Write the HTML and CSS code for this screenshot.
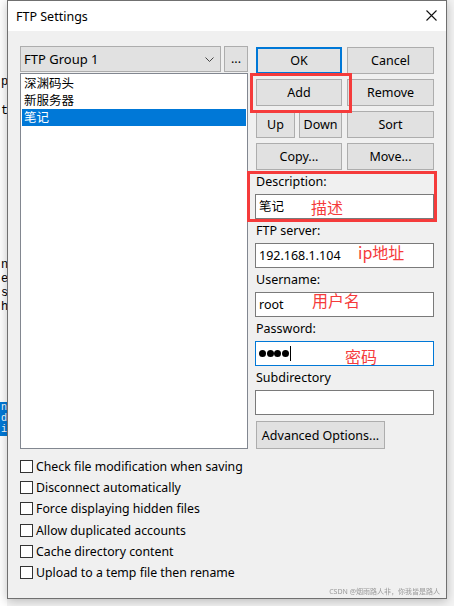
FILE: index.html
```html
<!doctype html>
<html lang="en">
  <head>
    <meta charset="UTF-8" />
    <meta name="viewport" content="width=device-width, initial-scale=1.0" />
    <title>FTP Settings</title>
    <link rel="stylesheet" href="styles.css">
  </head>

  <body>
    <!-- editor text behind the dialog -->
    <div class="desk-text">
      <div class="block block-1">p<br><br>t</div>
      <div class="block block-2">n<br>e<br>s<br>h</div>
      <div class="block block-3">n<br>d<br>i</div>
    </div>

    <div class="window">
      <div class="titlebar">
        <span class="title">FTP Settings</span>
        <svg class="close" width="11" height="11" viewBox="0 0 11 11">
          <path d="M0.5 0.5 L10.5 10.5 M10.5 0.5 L0.5 10.5" stroke="#111" stroke-width="1.1" fill="none" />
        </svg>
      </div>

      <div class="client">
        <div class="main">
          <div class="left">
            <div class="group-row">
              <div class="combo">
                <span>FTP Group 1</span>
                <svg width="9" height="5" viewBox="0 0 9 5">
                  <path d="M0.5 0.5 L4.5 4.5 L8.5 0.5" stroke="#444" stroke-width="1" fill="none" />
                </svg>
              </div>
              <div class="btn btn-dots">...</div>
            </div>
            <ul class="list">
              <li>深渊码头</li>
              <li>新服务器</li>
              <li class="selected">笔记</li>
            </ul>
          </div>

          <div class="right">
            <div class="btn-grid">
              <div class="btn btn-default">OK</div>
              <div class="btn">Cancel</div>
              <div class="btn btn-marked">Add</div>
              <div class="btn">Remove</div>
              <div class="updown">
                <div class="btn btn-up">Up</div>
                <div class="btn btn-down">Down</div>
              </div>
              <div class="btn">Sort</div>
              <div class="btn">Copy...</div>
              <div class="btn">Move...</div>
            </div>

            <div class="fields">
              <div class="field field-marked">
                <label class="field-label">Description:</label>
                <div class="input">笔记<span class="note note-desc">描述</span></div>
              </div>
              <div class="field">
                <label class="field-label">FTP server:</label>
                <div class="input">192.168.1.104<span class="note note-ip">ip地址</span></div>
              </div>
              <div class="field">
                <label class="field-label">Username:</label>
                <div class="input">root<span class="note note-user">用户名</span></div>
              </div>
              <div class="field">
                <label class="field-label">Password:</label>
                <div class="input input-focus">
                  <span class="dot"></span><span class="dot"></span><span class="dot"></span><span class="dot"></span><span class="caret"></span>
                  <span class="note note-pass">密码</span>
                </div>
              </div>
              <div class="field">
                <label class="field-label">Subdirectory</label>
                <div class="input"></div>
              </div>
            </div>

            <div class="btn btn-adv">Advanced Options...</div>
          </div>
        </div>

        <div class="checks">
          <div class="check"><span class="box"></span>Check file modification when saving</div>
          <div class="check"><span class="box"></span>Disconnect automatically</div>
          <div class="check"><span class="box"></span>Force displaying hidden files</div>
          <div class="check"><span class="box"></span>Allow duplicated accounts</div>
          <div class="check"><span class="box"></span>Cache directory content</div>
          <div class="check"><span class="box"></span>Upload to a temp file then rename</div>
        </div>
      </div>
    </div>

    <span class="watermark">CSDN @烟雨路人非，你我皆是路人</span>
  </body>
</html>
```

FILE: styles.css
```css
*,
*::before,
*::after {
  box-sizing: border-box;
}

body {
  margin: 0;
  width: 454px;
  height: 606px;
  position: relative;
  overflow: hidden;
  background-color: #f4f4f4;
  font-family: "Noto Sans", "Noto Sans CJK SC", sans-serif;
  font-size: 12px;
  color: #000;
}

/* strip of the editor peeking out on the left */
.desk-text {
  width: 7px;
  height: 606px;
  overflow: hidden;
  background-color: #fff;
  font-family: "Liberation Mono", monospace;
  font-size: 12px;
  line-height: 14px;
  padding-left: 1px;
}

.block-1 {
  margin-top: 75px;
  line-height: 14.5px;
}

.block-2 {
  margin-top: 139px;
}

.block-3 {
  margin-top: 88px;
  margin-left: -1px;
  padding-left: 1px;
  font-size: 10px;
  line-height: 11.3px;
  height: 34px;
  background-color: #0078d7;
  color: #fff;
}

/* the dialog window sits on top of the desktop */
.window {
  position: absolute;
  left: 7px;
  top: 0;
  width: 440px;
  height: 599px;
  border: 1px solid #707070;
  background-color: #f0f0f0;
  box-shadow: 0 2px 10px rgba(0, 0, 0, 0.25);
}

.titlebar {
  height: 30px;
  background-color: #fff;
  display: flex;
  align-items: center;
  justify-content: space-between;
  padding: 0 9px 0 8px;
}

.title {
  font-size: 12.5px;
}

.close {
  margin-top: -1px;
}

.client {
  padding: 15px 12px 0 12px;
}

.main {
  display: flex;
  gap: 7px;
}

.left {
  width: 228px;
  display: flex;
  flex-direction: column;
  gap: 1px;
}

.group-row {
  display: flex;
  gap: 3px;
  height: 26px;
}

.combo {
  width: 201px;
  height: 26px;
  background-color: #e1e1e1;
  border: 1px solid #adadad;
  display: flex;
  align-items: center;
  justify-content: space-between;
  padding: 0 6px 0 3px;
  font-size: 13px;
}

.btn {
  background-color: #e1e1e1;
  border: 1px solid #adadad;
  display: flex;
  align-items: center;
  justify-content: center;
  font-size: 12.5px;
}

.btn-dots {
  width: 24px;
  height: 26px;
  padding-bottom: 2px;
}

.list {
  height: 376px;
  margin: 0;
  padding: 1px;
  list-style: none;
  background-color: #fff;
  border: 1px solid #828790;
}

.list li {
  height: 17px;
  line-height: 17px;
  padding-left: 2px;
  font-size: 12.5px;
}

.list .selected {
  background-color: #0078d7;
  color: #fff;
}

.right {
  width: 179px;
  padding-top: 1px;
}

.btn-grid {
  display: grid;
  grid-template-columns: 86px 87px;
  grid-auto-rows: 27px;
  gap: 5px;
  margin-left: 1px;
}

.btn-default {
  border-color: #0078d7;
  box-shadow: inset 0 0 0 1px #0078d7;
}

/* red marker frames drawn over the dialog */
.btn-marked,
.field-marked {
  position: relative;
}

.btn-marked::after {
  content: "";
  position: absolute;
  left: -7px;
  top: -7px;
  width: 102px;
  height: 40px;
  border: 3px solid #f53b3b;
}

.field-marked::after {
  content: "";
  position: absolute;
  left: -8px;
  top: 1px;
  width: 190px;
  height: 51px;
  border: 3px solid #f53b3b;
}

.updown {
  display: flex;
  gap: 4px;
}

.btn-up {
  width: 39px;
}

.btn-down {
  width: 43px;
}

.fields {
  display: flex;
  flex-direction: column;
}

.field {
  position: relative;
}

.field-label {
  display: block;
  height: 24px;
  line-height: 23px;
  padding-left: 1px;
  font-size: 12.5px;
}

.input {
  position: relative;
  height: 25px;
  line-height: 23px;
  background-color: #fff;
  border: 1px solid #7a7a7a;
  padding-left: 3px;
  font-size: 12.5px;
  display: flex;
  align-items: center;
}

.input-focus {
  border-color: #0078d7;
}

.dot {
  width: 7px;
  height: 7px;
  border-radius: 50%;
  background-color: #000;
  margin-right: 0.5px;
}

.caret {
  width: 1px;
  height: 15px;
  background-color: #000;
  margin-left: 1px;
}

/* handwritten red notes */
.note {
  position: absolute;
  font-family: "Noto Sans CJK SC", "Noto Sans", sans-serif;
  font-size: 16px;
  line-height: 16px;
  color: #f53b3b;
}

.note-desc {
  left: 55px;
  top: 4px;
}

.note-ip {
  left: 102px;
  top: 0;
}

.note-user {
  left: 56px;
  top: -1px;
}

.note-pass {
  left: 89px;
  top: 6px;
}

.btn-adv {
  margin-top: 6px;
  margin-left: 1px;
  width: 129px;
  height: 28px;
}

.checks {
  margin-top: 6px;
  padding-top: 0.5px;
}

.check {
  height: 21.33px;
  display: flex;
  align-items: center;
  gap: 3px;
  font-size: 12.3px;
}

.box {
  width: 13px;
  height: 13px;
  border: 1px solid #333;
  background-color: #fff;
}

.watermark {
  position: absolute;
  right: 14px;
  top: 587px;
  font-size: 7px;
  line-height: 10px;
  color: #9a9a9a;
  filter: blur(0.3px);
}
```
